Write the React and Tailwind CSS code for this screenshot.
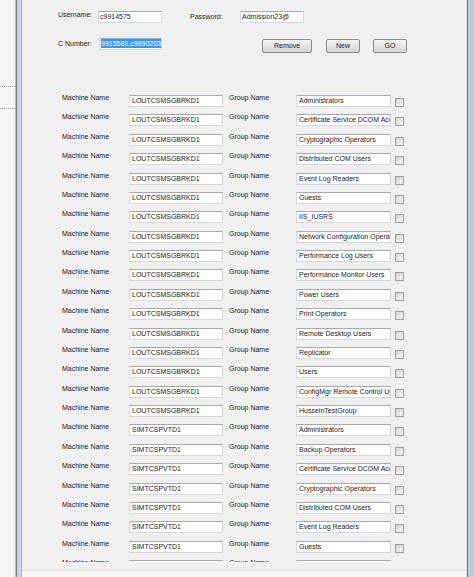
import React from "react";

const rows = [
  ["LOUTCSMSGBRKD1", "Administrators"],
  ["LOUTCSMSGBRKD1", "Certificate Service DCOM Access"],
  ["LOUTCSMSGBRKD1", "Cryptographic Operators"],
  ["LOUTCSMSGBRKD1", "Distributed COM Users"],
  ["LOUTCSMSGBRKD1", "Event Log Readers"],
  ["LOUTCSMSGBRKD1", "Guests"],
  ["LOUTCSMSGBRKD1", "IIS_IUSRS"],
  ["LOUTCSMSGBRKD1", "Network Configuration Operators"],
  ["LOUTCSMSGBRKD1", "Performance Log Users"],
  ["LOUTCSMSGBRKD1", "Performance Monitor Users"],
  ["LOUTCSMSGBRKD1", "Power Users"],
  ["LOUTCSMSGBRKD1", "Print Operators"],
  ["LOUTCSMSGBRKD1", "Remote Desktop Users"],
  ["LOUTCSMSGBRKD1", "Replicator"],
  ["LOUTCSMSGBRKD1", "Users"],
  ["LOUTCSMSGBRKD1", "ConfigMgr Remote Control Users"],
  ["LOUTCSMSGBRKD1", "HusseinTestGroup"],
  ["SIMTCSPVTD1", "Administrators"],
  ["SIMTCSPVTD1", "Backup Operators"],
  ["SIMTCSPVTD1", "Certificate Service DCOM Access"],
  ["SIMTCSPVTD1", "Cryptographic Operators"],
  ["SIMTCSPVTD1", "Distributed COM Users"],
  ["SIMTCSPVTD1", "Event Log Readers"],
  ["SIMTCSPVTD1", "Guests"],
  ["SIMTCSPVTD1", "IIS_IUSRS"],
];

function Box({ className = "", children }) {
  return (
    <div
      className={
        "h-[12px] bg-white border border-[#d6d8dd] border-t-[#a6a9b0] leading-[10px] overflow-hidden whitespace-nowrap text-[#222] " +
        className
      }
    >
      {children}
    </div>
  );
}

function Btn({ className = "", children }) {
  return (
    <div
      className={
        "h-[14px] rounded-[2px] border border-[#8b8b8b] bg-gradient-to-b from-[#f5f5f5] via-[#e6e6e6] to-[#d4d4d4] flex items-center justify-center text-[#1a1a1a] leading-[8px] " +
        className
      }
    >
      {children}
    </div>
  );
}

export default function App() {
  return (
    <div className="w-[474px] h-[577px] flex overflow-hidden bg-[#f0f0f0] font-['Liberation_Sans',Arial,sans-serif] text-[7px] text-[#1a1a1a]">
      {/* left background window strip */}
      <div className="w-[15px] h-full bg-[#f7f7f7] flex flex-col">
        <div className="h-[86px]" />
        <div className="border-t border-dotted border-[#9a9a9a]" />
        <div className="h-[21px]" />
        <div className="border-t border-dotted border-[#9a9a9a]" />
      </div>
      <div className="w-[1px] h-full bg-[#b9b9b9]" />
      <div className="w-[1px] h-full bg-[#7c7c7c]" />
      <div className="w-[4px] h-full bg-[#c3d6ec]" />
      <div className="w-[1px] h-full bg-[#aab7c7]" />

      {/* main content */}
      <div className="flex-1 h-full flex flex-col">
        <div className="h-[570px] overflow-hidden">
          {/* row 1 */}
          <div className="mt-[11px] ml-[36px] flex items-start h-[12px]">
            <div className="w-[40px] leading-[8px]">Username:</div>
            <Box className="w-[64px] px-[1px]">c9914575</Box>
            <div className="w-[50px] ml-[28px] leading-[8px] mt-[2px]">Password:</div>
            <Box className="w-[64px] px-[1px]">Admission23@</Box>
          </div>
          {/* row 2 */}
          <div className="mt-[15px] ml-[36px] flex items-start h-[15px]">
            <div className="w-[41px] leading-[8px] mt-[2px]">C Number:</div>
            <Box className="w-[63px] px-[1px] leading-[9px]">
              <span className="bg-[#3399ff] text-white inline-block leading-[9px]">9915580,c9990203</span>
            </Box>
            <Btn className="w-[50px] ml-[100px] mt-[1px]">Remove</Btn>
            <Btn className="w-[34px] ml-[14px] mt-[1px]">New</Btn>
            <Btn className="w-[34px] ml-[13px] mt-[1px]">GO</Btn>
          </div>
          {/* list */}
          <div className="mt-[41px] h-[468px] overflow-hidden flex flex-col">
            {rows.map(([m, g], i) => (
              <div key={i} className="h-[19.375px] shrink-0 ml-[40px] flex items-start">
                <div className="w-[67px] leading-[8px]">Machine Name</div>
                <Box className="w-[94px] mt-[1px] px-[2px]">{m}</Box>
                <div className="w-[67px] ml-[6px] leading-[8px]">Group Name</div>
                <Box className="w-[95px] mt-[1px] px-[2px]">{g}</Box>
                <div className="w-[9px] h-[9px] ml-[4px] mt-[4px] border border-[#a0a0a0] bg-gradient-to-br from-[#d4d4d4] to-[#f6f6f6]" />
              </div>
            ))}
          </div>
        </div>
        <div className="flex-1 bg-[#f7f7f7] border-t border-[#e2e2e2]" />
      </div>

      {/* right frame */}
      <div className="w-[1px] h-full bg-[#e4e4e4]" />
      <div className="w-[1px] h-full bg-[#767676]" />
      <div className="w-[6px] h-full bg-[#b8cce4]" />
    </div>
  );
}
